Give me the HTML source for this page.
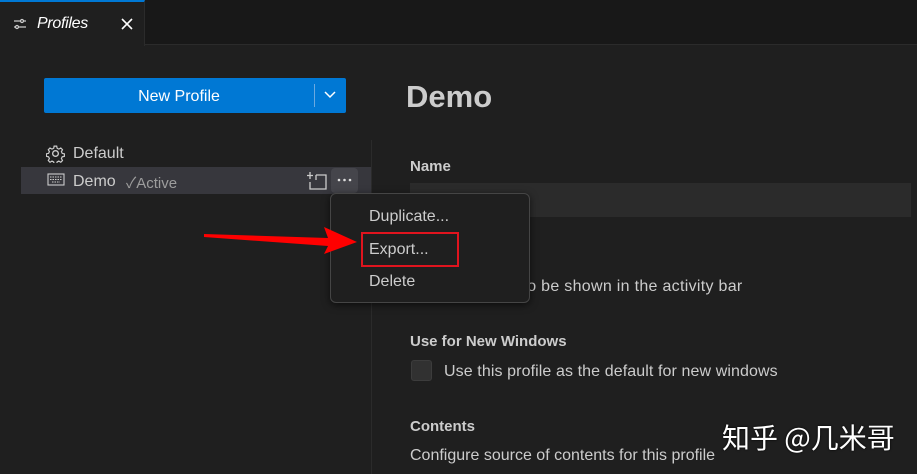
<!DOCTYPE html>
<html><head><meta charset="utf-8"><style>
*{margin:0;padding:0;box-sizing:border-box}
body{width:917px;height:474px;overflow:hidden;background:#1f1f1f;font-family:"Liberation Sans","Noto Sans CJK SC",sans-serif;color:#ccc;position:relative}
.a{position:absolute;white-space:nowrap}
</style></head><body>
<div class="a" style="left:0;top:0;width:917px;height:45px;background:#181818;border-bottom:1px solid #2b2b2b"></div>
<div class="a" style="left:0;top:0;width:145px;height:46px;background:#1f1f1f;border-top:2px solid #0078d4;border-right:1px solid #2b2b2b"></div>
<svg class="a" style="left:13px;top:17px" width="14" height="14" viewBox="0 0 14 14" fill="none" stroke="#ccc" stroke-width="1.2"><path d="M1 4h12M1 10h12"/><circle cx="9" cy="4" r="1.5" fill="#1f1f1f"/><circle cx="4" cy="10" r="1.5" fill="#1f1f1f"/></svg>
<div class="a" style="left:37px;top:15px;font-size:16px;font-style:italic;color:#fff;letter-spacing:-0.3px">Profiles</div>
<svg class="a" style="left:121px;top:18px" width="12" height="12" viewBox="0 0 12 12" stroke="#fff" stroke-width="1.6"><path d="M1 1l10 10M11 1L1 11"/></svg>

<div class="a" style="left:44px;top:78px;width:302px;height:35px;background:#0078d4;border-radius:2px"></div>
<div class="a" style="left:44px;top:88px;width:270px;text-align:center;font-size:16px;color:#fff">New Profile</div>
<div class="a" style="left:314px;top:84px;width:1px;height:23px;background:#6aa9e0"></div>
<svg class="a" style="left:323px;top:90px" width="14" height="10" viewBox="0 0 14 10" fill="none" stroke="#fff" stroke-width="1.5"><path d="M2 2l5 5 5-5"/></svg>

<div class="a" style="left:371px;top:140px;width:1px;height:334px;background:#2b2b2b"></div>
<svg class="a" style="left:46px;top:144px" width="19" height="19" viewBox="0 0 20 20" fill="none" stroke="#ccc" stroke-width="1.4"><circle cx="10" cy="10" r="3"/><path d="M8.5 1.5h3l.5 2.5 2 1 2.3-1.3 2 2-1.3 2.3 1 2 2.5.5v3l-2.5.5-1 2 1.3 2.3-2 2-2.3-1.3-2 1-.5 2.5h-3l-.5-2.5-2-1-2.3 1.3-2-2 1.3-2.3-1-2-2.5-.5v-3l2.5-.5 1-2-1.3-2.3 2-2 2.3 1.3 2-1z" transform="scale(.9) translate(1 1)"/></svg>
<div class="a" style="left:73px;top:145px;font-size:16px;color:#ccc">Default</div>
<div class="a" style="left:21px;top:167px;width:350px;height:27px;background:#37373d"></div>
<svg class="a" style="left:47px;top:173px" width="18" height="13" viewBox="0 0 18 13" fill="none" stroke="#ccc" stroke-width="1.1"><rect x="1" y="1" width="16" height="11"/><path d="M3 4h12M3 6.5h12M5 9h8" stroke-dasharray="1.5 1"/></svg>
<div class="a" style="left:73px;top:173px;font-size:16px;color:#ccc">Demo</div>
<div class="a" style="left:126px;top:172px;font-size:15px;color:#9d9d9d">✓Active</div>
<svg class="a" style="left:306px;top:171px" width="22" height="20" viewBox="0 0 22 20" fill="none" stroke="#ccc" stroke-width="1.3"><path d="M4 1v7M1 4.5h6M10 4h10v14H4v-7M10 4v5"/></svg>
<div class="a" style="left:331px;top:168px;width:27px;height:25px;background:#45454b;border-radius:4px"></div>
<svg class="a" style="left:331px;top:168px" width="27" height="25"><circle cx="8" cy="12" r="1.3" fill="#ddd"/><circle cx="13.5" cy="12" r="1.3" fill="#ddd"/><circle cx="19" cy="12" r="1.3" fill="#ddd"/></svg>

<div class="a" style="left:406px;top:79px;font-size:31px;color:#ccc;font-weight:700">Demo</div>
<div class="a" style="left:410px;top:158px;font-size:15px;color:#ccc;font-weight:700">Name</div>
<div class="a" style="left:410px;top:183px;width:501px;height:34px;background:#2b2b2b"></div>
<div class="a" style="left:413px;top:278px;font-size:16px;color:#ccc;letter-spacing:0.3px">Select an icon to be shown in the activity bar</div>
<div class="a" style="left:410px;top:333px;font-size:15px;color:#ccc;font-weight:700">Use for New Windows</div>
<div class="a" style="left:411px;top:360px;width:21px;height:21px;background:#313131;border:1px solid #3c3c3c;border-radius:3px"></div>
<div class="a" style="left:444px;top:363px;font-size:16px;color:#ccc;letter-spacing:0.1px">Use this profile as the default for new windows</div>
<div class="a" style="left:410px;top:418px;font-size:15px;color:#ccc;font-weight:700">Contents</div>
<div class="a" style="left:410px;top:447px;font-size:16px;color:#ccc">Configure source of contents for this profile</div>
<div class="a" style="left:722px;top:417px;font-size:28px;color:#fff;font-family:'Noto Sans CJK SC',sans-serif;text-shadow:0 0 2px #000">知乎 @几米哥</div>

<div class="a" style="left:330px;top:193px;width:200px;height:110px;background:#1f1f1f;border:1px solid #454545;border-radius:6px;box-shadow:0 2px 8px rgba(0,0,0,.6)"></div>
<div class="a" style="left:369px;top:208px;font-size:16px;color:#ccc">Duplicate...</div>
<div class="a" style="left:369px;top:241px;font-size:16px;color:#ccc">Export...</div>
<div class="a" style="left:369px;top:273px;font-size:16px;color:#ccc">Delete</div>
<div class="a" style="left:361px;top:232px;width:98px;height:35px;border:2px solid #e0141e"></div>
<svg class="a" style="left:0;top:0" width="917" height="474"><path d="M204 234L328 238L324 227L357 242L324 254L328 246L204 237Z" fill="#f00"/></svg>
</body></html>
